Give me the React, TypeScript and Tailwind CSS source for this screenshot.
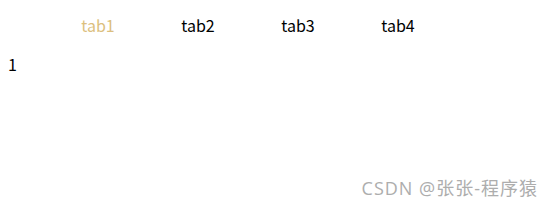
const tabs = ['tab1', 'tab2', 'tab3', 'tab4'];

export default function App() {
  const active = 0;
  return (
    <div
      className="relative h-[208px] w-full bg-white p-2 text-black"
      style={{ fontFamily: '"Noto Sans CJK SC", "Noto Sans", sans-serif' }}
    >
      <ul className="mt-[7px] flex pl-[40px] text-[16px] leading-[21px]">
        {tabs.map((tab, i) => (
          <li
            key={tab}
            className={`w-[100px] text-center ${i === active ? 'text-[#dcbf7e]' : 'text-black'}`}
          >
            {tab}
          </li>
        ))}
      </ul>
      <div className="mt-[18px] text-[16px] leading-[21px]">1</div>
      <div
        className="absolute right-[12px] top-[176px] text-[18px] leading-[24px] tracking-[1px] text-[#adadad]"
        style={{ fontFamily: '"Open Sans", "Noto Sans CJK SC", sans-serif' }}
      >
        CSDN @张张-程序猿
      </div>
    </div>
  );
}
